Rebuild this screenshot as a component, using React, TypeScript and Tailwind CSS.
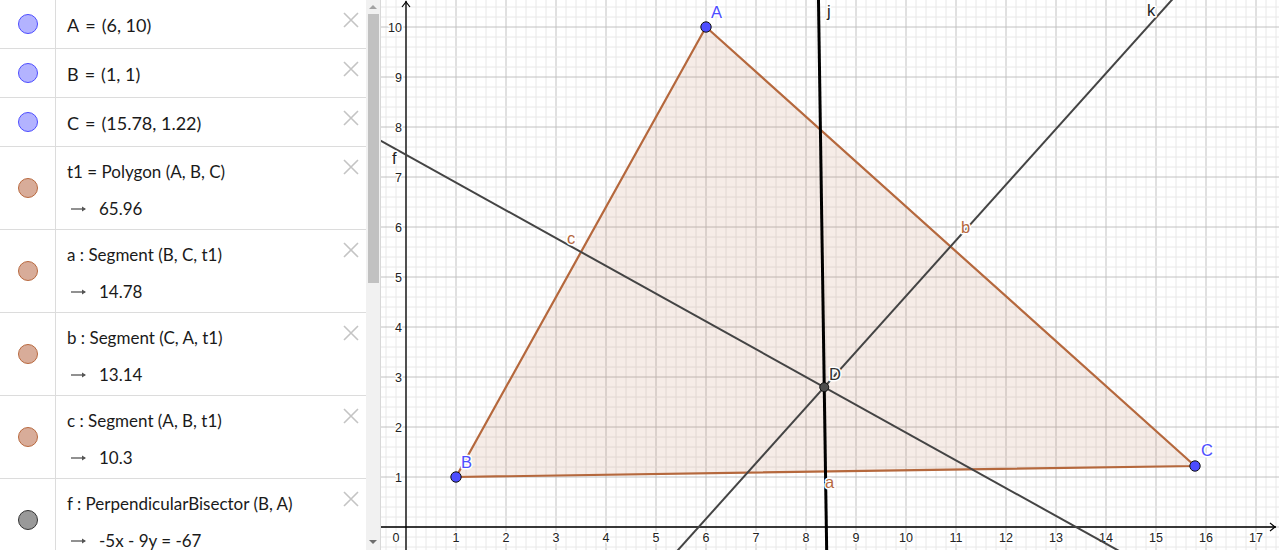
import React from 'react';

type Row = {
  color: 'blue' | 'brown' | 'gray';
  label: React.ReactNode;
  value?: string;
};

const rows: Row[] = [
  { color: 'blue', label: <>A<Eq />(6, 10)</> },
  { color: 'blue', label: <>B<Eq />(1, 1)</> },
  { color: 'blue', label: <>C<Eq />(15.78, 1.22)</> },
  { color: 'brown', label: 't1 = Polygon (A, B, C)', value: '65.96' },
  { color: 'brown', label: 'a : Segment (B, C, t1)', value: '14.78' },
  { color: 'brown', label: 'b : Segment (C, A, t1)', value: '13.14' },
  { color: 'brown', label: 'c : Segment (A, B, t1)', value: '10.3' },
  { color: 'gray', label: 'f : PerpendicularBisector (B, A)', value: '-5x - 9y = -67' },
];

function Eq() {
  return <span className="mx-[6px]">=</span>;
}

const dotClass = {
  blue: 'bg-[#b3b3ff] border-[#4d4dff]',
  brown: 'bg-[#d8ac99] border-[#b8693f]',
  gray: 'bg-[#999999] border-[#333333]',
};

function AlgebraRow({ row }: { row: Row }) {
  return (
    <div className="flex border-b border-[#dcdcdc]">
      <div className="w-[56px] shrink-0 border-r border-[#dcdcdc] flex items-center justify-center">
        <div className={`w-[20px] h-[20px] rounded-full border ${dotClass[row.color]}`} />
      </div>
      <div
        className={`flex-1 pl-[11px] pt-[13px] text-[#1a1a1a] ${
          row.value ? 'pb-[8px] text-[17px]' : 'pb-[11px] text-[18px]'
        }`}
      >
        <div className="leading-[24px] whitespace-nowrap">{row.label}</div>
        {row.value && (
          <div className="mt-[13px] leading-[24px] flex items-center whitespace-nowrap">
            <svg width="16" height="8" viewBox="0 0 16 8" className="ml-[4px] mr-[12px]">
              <line x1="0" y1="4" x2="14" y2="4" stroke="#555" strokeWidth="1.3" />
              <path d="M11 1.5 L15 4 L11 6.5 Z" fill="#555" />
            </svg>
            {row.value}
          </div>
        )}
      </div>
      <div className="pt-[12px] pr-[7px]">
        <svg width="16" height="16" viewBox="0 0 16 16">
          <path d="M1 1 L15 15 M15 1 L1 15" stroke="#c4c4c4" strokeWidth="1.6" />
        </svg>
      </div>
    </div>
  );
}

const OX = 25;
const OY = 527;
const U = 50;
const W = 898;
const H = 550;
const px = (x: number) => OX + U * x;
const py = (y: number) => OY - U * y;

function Graph() {
  const vMinor: number[] = [];
  for (let k = -2; OX + 10 * k <= W; k++) vMinor.push(k);
  const hMinor: number[] = [];
  for (let k = -3; OY - 10 * k >= 0; k++) hMinor.push(k);

  const A = [px(6), py(10)];
  const B = [px(1), py(1)];
  const C = [px(15.78), py(1.22)];
  const D = [px(8.365), py(2.797)];

  const fy = (x: number) => (67 - 5 * x) / 9;
  const jx = (y: number) => (124.2484 - 0.22 * y) / 14.78;
  const kx = (y: number) => (8.78 * y + 57.248) / 9.78;

  const halo = {
    stroke: 'white',
    strokeWidth: 3,
    paintOrder: 'stroke' as const,
    strokeLinejoin: 'round' as const,
  };

  return (
    <svg width={W} height={H} className="block" style={{ fontFamily: '"Liberation Sans", Arial, sans-serif' }}>
      <rect width={W} height={H} fill="white" />
      {vMinor.map((k) => (
        <line
          key={'v' + k}
          x1={OX + 10 * k}
          x2={OX + 10 * k}
          y1={0}
          y2={H}
          stroke={k % 5 === 0 ? '#c2c2c2' : '#e8e8e8'}
          strokeWidth={1}
        />
      ))}
      {hMinor.map((k) => (
        <line
          key={'h' + k}
          y1={OY - 10 * k}
          y2={OY - 10 * k}
          x1={0}
          x2={W}
          stroke={k % 5 === 0 ? '#c2c2c2' : '#e8e8e8'}
          strokeWidth={1}
        />
      ))}

      {/* axes */}
      <line x1={OX} x2={OX} y1={1} y2={H} stroke="#000" strokeWidth={1.3} />
      <line x1={0} x2={W - 3} y1={OY} y2={OY} stroke="#000" strokeWidth={1.3} />
      <path d={`M${OX - 4} 7 L${OX} 2 L${OX + 4} 7`} fill="none" stroke="#000" strokeWidth={1.2} />
      <path d={`M${W - 9} ${OY - 4} L${W - 4} ${OY} L${W - 9} ${OY + 4}`} fill="none" stroke="#000" strokeWidth={1.2} />

      {/* axis numbers */}
      <g fontSize="12.5" fill="#222">
        <text x={15} y={542} textAnchor="middle" {...halo}>0</text>
        {Array.from({ length: 17 }, (_, i) => i + 1).map((n) => (
          <text key={'xn' + n} x={px(n)} y={542} textAnchor="middle" {...halo}>
            {n}
          </text>
        ))}
        {Array.from({ length: 10 }, (_, i) => i + 1).map((n) => (
          <text key={'yn' + n} x={OX - 4} y={py(n) + 4.5} textAnchor="end" {...halo}>
            {n}
          </text>
        ))}
      </g>

      {/* polygon */}
      <polygon
        points={`${A[0]},${A[1]} ${B[0]},${B[1]} ${C[0]},${C[1]}`}
        fill="rgba(180,100,60,0.12)"
        stroke="#b5683d"
        strokeWidth={2.2}
        strokeLinejoin="round"
      />

      {/* lines */}
      <line x1={px(-1)} y1={py(fy(-1))} x2={px(15)} y2={py(fy(15))} stroke="#444" strokeWidth={2} />
      <line x1={px(kx(-1))} y1={py(-1)} x2={px(kx(11))} y2={py(11)} stroke="#444" strokeWidth={2} />
      <line x1={px(jx(-1))} y1={py(-1)} x2={px(jx(11))} y2={py(11)} stroke="#000" strokeWidth={3} />

      {/* points */}
      <circle cx={D[0]} cy={D[1]} r={4.5} fill="#4d4d4d" stroke="#111" strokeWidth={1} />
      {[A, B, C].map((p, i) => (
        <circle key={i} cx={p[0]} cy={p[1]} r={5.2} fill="#4d4dff" stroke="#111" strokeWidth={1} />
      ))}

      {/* labels */}
      <g fontSize="16.5">
        <text x={712 - 382} y={18} fill="#4d4dff" {...halo}>A</text>
        <text x={462 - 382} y={468} fill="#4d4dff" {...halo}>B</text>
        <text x={1202 - 382} y={456} fill="#4d4dff" {...halo}>C</text>
        <text x={830 - 382} y={380} fill="#333" {...halo}>D</text>
        <text x={826 - 382} y={488} fill="#b5683d" {...halo}>a</text>
        <text x={962 - 382} y={233} fill="#b5683d" {...halo}>b</text>
        <text x={568 - 382} y={244} fill="#b5683d" {...halo}>c</text>
        <text x={393 - 382} y={164} fill="#222" {...halo}>f</text>
        <text x={828 - 382} y={17} fill="#222" {...halo}>j</text>
        <text x={1148 - 382} y={16} fill="#222" {...halo}>k</text>
      </g>
    </svg>
  );
}

export default function App() {
  return (
    <div className="flex w-[1280px] h-[550px] overflow-hidden bg-white" style={{ fontFamily: 'Lato, "Noto Sans", sans-serif' }}>
      <div className="w-[366px] shrink-0 h-full overflow-hidden">
        {rows.map((row, i) => (
          <AlgebraRow key={i} row={row} />
        ))}
      </div>
      <div className="w-[15px] shrink-0 h-full bg-[#f1f1f1] flex flex-col items-center justify-between border-r border-[#d8d8d8]">
        <div className="w-full flex flex-col items-center">
          <svg width="10" height="6" viewBox="0 0 10 6" className="mt-[4px]">
            <path d="M1 5 L5 1 L9 5 Z" fill="#a3a3a3" />
          </svg>
          <div className="mt-[4px] w-[11px] h-[269px] bg-[#c1c1c1]" />
        </div>
        <svg width="10" height="6" viewBox="0 0 10 6" className="mb-[5px]">
          <path d="M1 1 L5 5 L9 1 Z" fill="#6e6e6e" />
        </svg>
      </div>
      <div className="flex-1 h-full">
        <Graph />
      </div>
    </div>
  );
}
